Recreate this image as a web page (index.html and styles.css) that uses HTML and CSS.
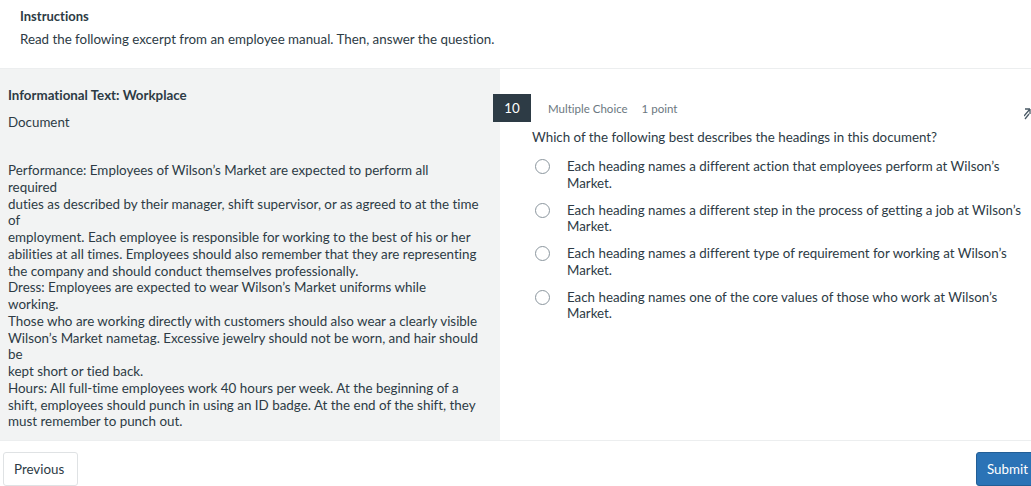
FILE: index.html
```html
<!DOCTYPE html>
<html>
<head>
<meta charset="utf-8">
<link rel="stylesheet" href="styles.css">
</head>
<body>
<header class="instructions">
  <div class="inst-title">Instructions</div>
  <div class="inst-text">Read the following excerpt from an employee manual. Then, answer the question.</div>
</header>
<main class="main">
  <section class="passage">
    <div class="passage-title">Informational Text: Workplace</div>
    <div class="passage-sub">Document</div>
    <div class="passage-body">Performance: Employees of Wilson’s Market are expected to perform all<br>required<br>duties as described by their manager, shift supervisor, or as agreed to at the time<br>of<br>employment. Each employee is responsible for working to the best of his or her<br>abilities at all times. Employees should also remember that they are representing<br>the company and should conduct themselves professionally.<br>Dress: Employees are expected to wear Wilson’s Market uniforms while<br>working.<br>Those who are working directly with customers should also wear a clearly visible<br>Wilson’s Market nametag. Excessive jewelry should not be worn, and hair should<br>be<br>kept short or tied back.<br>Hours: All full-time employees work 40 hours per week. At the beginning of a<br>shift, employees should punch in using an ID badge. At the end of the shift, they<br>must remember to punch out.</div>
  </section>
  <section class="question">
    <div class="q-head">
      <span class="q-num">10</span>
      <span class="q-type">Multiple Choice</span>
      <span class="q-points">1 point</span>
      <svg class="q-icon" width="10" height="12" viewBox="0 0 10 12"><path d="M1 1 L6 1 M6 1 L6 6 M6 1 L0 8" fill="none" stroke="#4a5a66" stroke-width="1.3"/><path d="M5 6 L1 11" fill="none" stroke="#4a5a66" stroke-width="1.3"/></svg>
    </div>
    <div class="q-text">Which of the following best describes the headings in this document?</div>
    <ul class="options">
      <li class="option"><span class="radio"></span><span class="opt-text">Each heading names a different action that employees perform at Wilson’s<br>Market.</span></li>
      <li class="option"><span class="radio"></span><span class="opt-text">Each heading names a different step in the process of getting a job at Wilson’s<br>Market.</span></li>
      <li class="option"><span class="radio"></span><span class="opt-text">Each heading names a different type of requirement for working at Wilson’s<br>Market.</span></li>
      <li class="option"><span class="radio"></span><span class="opt-text">Each heading names one of the core values of those who work at Wilson’s<br>Market.</span></li>
    </ul>
  </section>
</main>
<footer class="footer">
  <button class="btn btn-prev">Previous</button>
  <button class="btn btn-submit">Submit</button>
</footer>
</body>
</html>
```

FILE: styles.css
```css
html, body {
  margin: 0;
  padding: 0;
  background: #ffffff;
  font-family: Lato, "Liberation Sans", sans-serif;
  color: #2d3b45;
  overflow: hidden;
  font-variant-ligatures: none;
}
.instructions {
  padding: 8px 20px 0 20px;
  height: 60px;
  border-bottom: 1px solid #eceeef;
  box-sizing: content-box;
}
.inst-title {
  font-size: 13px;
  font-weight: 700;
  line-height: 17px;
}
.inst-text {
  font-size: 13.33px;
  line-height: 17px;
  margin-top: 6px;
}
.main {
  display: flex;
  height: 371px;
  border-bottom: 1px solid #eceeef;
}
.passage {
  width: 500px;
  flex: none;
  background: #f2f3f3;
  padding: 18px 8px 0 8px;
  box-sizing: border-box;
}
.passage-title {
  font-size: 13.33px;
  font-weight: 700;
  line-height: 17px;
}
.passage-sub {
  font-size: 13.33px;
  line-height: 17px;
  margin-top: 10px;
}
.passage-body {
  font-size: 13.4px;
  line-height: 16.75px;
  margin-top: 31px;
  white-space: nowrap;
}
.question {
  flex: 1;
  position: relative;
  padding-top: 25px;
}
.q-head {
  display: flex;
  align-items: center;
  margin-left: -7px;
  height: 28px;
}
.q-num {
  background: #2d3b45;
  color: #ffffff;
  width: 38px;
  height: 28px;
  display: flex;
  align-items: center;
  justify-content: center;
  font-size: 13.33px;
}
.q-type {
  font-size: 11.5px;
  color: #6b7780;
  margin-left: 17px;
}
.q-points {
  font-size: 11.5px;
  color: #6b7780;
  margin-left: 14px;
}
.q-icon {
  position: absolute;
  right: -3px;
  top: 39px;
}
.q-text {
  font-size: 13.33px;
  line-height: 17px;
  margin: 7px 0 0 32px;
}
.options {
  list-style: none;
  margin: 13px 0 0 32px;
  padding: 0;
}
.option {
  display: flex;
  align-items: flex-start;
  margin-bottom: 11.5px;
}
.radio {
  width: 13px;
  height: 13px;
  border: 1.5px solid #8b969e;
  border-radius: 50%;
  margin: 0 0 0 2.5px;
  flex: none;
}
.opt-text {
  font-size: 13.33px;
  line-height: 16.5px;
  margin-left: 17.5px;
  margin-top: -1px;
}
.footer {
  display: flex;
  justify-content: space-between;
  padding: 11px 0 0 3px;
}
.btn {
  font-family: Lato, "Liberation Sans", sans-serif;
  font-size: 13.33px;
  height: 34px;
  border-radius: 3px;
  cursor: pointer;
}
.btn-prev {
  background: #ffffff;
  color: #2d3b45;
  border: 1px solid #dfe2e4;
  width: 75px;
  padding: 0 0 0 10px;
  text-align: left;
}
.btn-submit {
  background: #2b73b6;
  color: #ffffff;
  border: 1px solid #225e96;
  width: 60px;
  margin-right: -5px;
  padding: 0 0 0 10px;
  text-align: left;
}
```
